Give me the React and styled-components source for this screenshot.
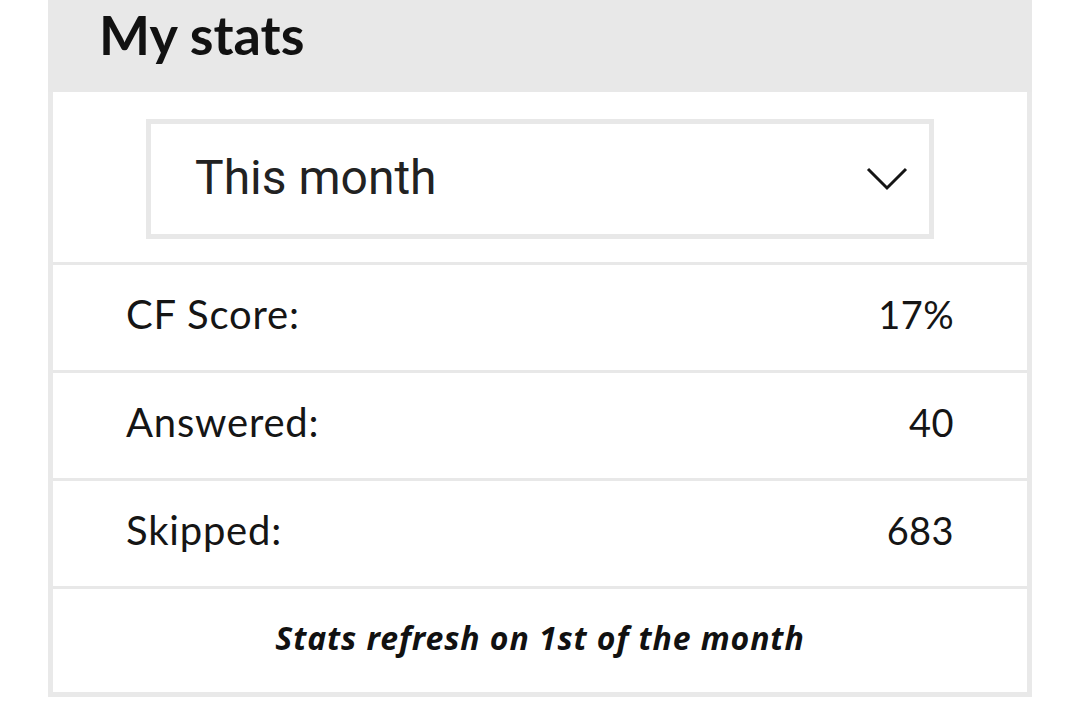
import React from "react";
import styled, { createGlobalStyle } from "styled-components";

const Global = createGlobalStyle`
  html, body { margin: 0; padding: 0; background: #ffffff; }
  body { font-family: "Lato", "Noto Sans", sans-serif; color: #151515; }
`;

const Panel = styled.section`
  width: 984px;
  margin-left: 48px;
`;

const Header = styled.header`
  height: 92px;
  background: #e8e8e8;
  display: flex;
  align-items: flex-start;
  padding-left: 51px;
  box-sizing: border-box;
`;

const Title = styled.h1`
  margin: 0;
  margin-top: 3px;
  font-family: "Lato", sans-serif;
  font-weight: 700;
  font-size: 54px;
  line-height: 64px;
  color: #111;
`;

const Body = styled.div`
  border: 5px solid #e9e9e9;
  border-top: 0;
  background: #fff;
`;

const SelectArea = styled.div`
  height: 170px;
  padding: 27px 0 0 93px;
  box-sizing: border-box;
`;

const Select = styled.div`
  width: 788px;
  height: 120px;
  border: 5px solid #e8e8e8;
  box-sizing: border-box;
  display: flex;
  align-items: center;
  justify-content: space-between;
  padding: 0 21px 0 44px;
`;

const SelectText = styled.span`
  font-family: "Roboto", sans-serif;
  font-size: 48px;
  color: #222;
  margin-top: -4px;
`;

const ChevronWrap = styled.span`
  display: flex;
`;

const Row = styled.div`
  height: 108px;
  border-top: 3px solid #e8e8e8;
  box-sizing: border-box;
  display: flex;
  align-items: center;
  justify-content: space-between;
  padding: 0 74px 8px 73px;
  font-family: "Lato", sans-serif;
  font-size: 40px;
  letter-spacing: 0.8px;
  color: #151515;
`;

const Value = styled.span`
  font-size: 38px;
  letter-spacing: 0.4px;
  margin-right: -1px;
`;

const Footer = styled.div`
  height: 106px;
  border-top: 3px solid #e8e8e8;
  box-sizing: border-box;
  display: flex;
  align-items: center;
  justify-content: center;
  padding-bottom: 6px;
  font-family: "Noto Sans", sans-serif;
  font-style: italic;
  font-weight: 700;
  font-size: 32px;
  letter-spacing: 0.9px;
  color: #111;
`;

const Chevron = () => (
  <svg width="42" height="26" viewBox="0 0 42 26" fill="none">
    <path d="M2 3 L21 22 L40 3" stroke="#151515" strokeWidth="3" />
  </svg>
);

const stats = [
  ["CF Score:", "17%"],
  ["Answered:", "40"],
  ["Skipped:", "683"],
];

export default function App() {
  return (
    <>
      <Global />
      <Panel>
        <Header>
          <Title>My stats</Title>
        </Header>
        <Body>
          <SelectArea>
            <Select>
              <SelectText>This month</SelectText>
              <ChevronWrap>
                <Chevron />
              </ChevronWrap>
            </Select>
          </SelectArea>
          {stats.map(([k, v]) => (
            <Row key={k}>
              <span>{k}</span>
              <Value>{v}</Value>
            </Row>
          ))}
          <Footer>Stats refresh on 1st of the month</Footer>
        </Body>
      </Panel>
    </>
  );
}
